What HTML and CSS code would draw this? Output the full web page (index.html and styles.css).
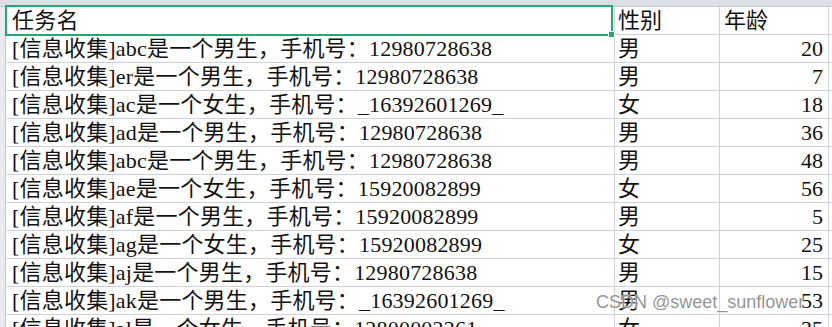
FILE: index.html
```html
<!DOCTYPE html>
<html lang="zh-CN">
<head>
<meta charset="utf-8">
<title>Sheet</title>
<link rel="stylesheet" href="styles.css">
</head>
<body>
<div class="app">
  <div class="col-head-strip"></div>
  <div class="body-wrap">
    <div class="row-head-strip"></div>
    <div class="grid">
      <div class="cell a selected">任务名</div><div class="cell b">性别</div><div class="cell c">年龄</div><div class="cell d"></div>
      <div class="cell a">[信息收集]abc是一个男生，手机号：12980728638</div><div class="cell b">男</div><div class="cell c num">20</div><div class="cell d"></div>
      <div class="cell a">[信息收集]er是一个男生，手机号：12980728638</div><div class="cell b">男</div><div class="cell c num">7</div><div class="cell d"></div>
      <div class="cell a">[信息收集]ac是一个女生，手机号：_16392601269_</div><div class="cell b">女</div><div class="cell c num">18</div><div class="cell d"></div>
      <div class="cell a">[信息收集]ad是一个男生，手机号：12980728638</div><div class="cell b">男</div><div class="cell c num">36</div><div class="cell d"></div>
      <div class="cell a">[信息收集]abc是一个男生，手机号：12980728638</div><div class="cell b">男</div><div class="cell c num">48</div><div class="cell d"></div>
      <div class="cell a">[信息收集]ae是一个女生，手机号：15920082899</div><div class="cell b">女</div><div class="cell c num">56</div><div class="cell d"></div>
      <div class="cell a">[信息收集]af是一个男生，手机号：15920082899</div><div class="cell b">男</div><div class="cell c num">5</div><div class="cell d"></div>
      <div class="cell a">[信息收集]ag是一个女生，手机号：15920082899</div><div class="cell b">女</div><div class="cell c num">25</div><div class="cell d"></div>
      <div class="cell a">[信息收集]aj是一个男生，手机号：12980728638</div><div class="cell b">男</div><div class="cell c num">15</div><div class="cell d"></div>
      <div class="cell a">[信息收集]ak是一个男生，手机号：_16392601269_</div><div class="cell b">男</div><div class="cell c num">53</div><div class="cell d"></div>
      <div class="cell a">[信息收集]al是一个女生，手机号：12800002261</div><div class="cell b">女</div><div class="cell c num">35</div><div class="cell d"></div>
    </div>
  </div>
  <div class="watermark">CSDN @sweet_sunflower</div>
</div>
</body>
</html>
```
FILE: styles.css
```css
html, body {
  margin: 0;
  padding: 0;
  background: #ffffff;
}
.app {
  position: relative;
  width: 832px;
  height: 327px;
  overflow: hidden;
  background: #ffffff;
}
.col-head-strip {
  height: 6px;
  background: #dcdfe5;
  border-bottom: 1px solid #c3c8d3;
}
.body-wrap {
  display: flex;
}
.row-head-strip {
  width: 5px;
  flex: none;
  background: #e8eaee;
  border-right: 1px solid #c3c8d3;
}
.grid {
  display: grid;
  grid-template-columns: 609px 105px 109px 1fr;
  grid-auto-rows: 28px;
  flex: 1;
}
.cell {
  box-sizing: border-box;
  border-right: 1px solid #cdd1dc;
  border-bottom: 1px solid #cdd1dc;
  font-family: "Liberation Serif", "Noto Sans CJK SC", serif;
  font-size: 22px;
  line-height: 27px;
  color: #111111;
  white-space: nowrap;
  overflow: hidden;
  padding: 0 4px 0 6px;
}
.cell.a {
  letter-spacing: 0.2px;
}
.cell.b {
  padding-left: 3px;
}
.cell.c {
  padding-left: 4px;
}
.cell.num {
  text-align: right;
  padding-right: 5px;
}
.cell.d {
  border-right: none;
}
.cell.selected {
  position: relative;
  overflow: visible;
}
.cell.selected::after {
  content: "";
  position: absolute;
  left: -1px;
  top: -2px;
  width: 608px;
  height: 31px;
  box-sizing: border-box;
  border: 2px solid #22a870;
  z-index: 2;
}
.cell.selected::before {
  content: "";
  position: absolute;
  left: 602px;
  top: 24px;
  width: 5px;
  height: 5px;
  background: #22a870;
  border: 1px solid #ffffff;
  z-index: 3;
}
.watermark {
  position: absolute;
  left: 596px;
  top: 291px;
  font-family: "Liberation Sans", Arial, sans-serif;
  font-size: 18px;
  line-height: 22px;
  color: rgba(110, 110, 110, 0.75);
  text-shadow: 0 0 1px #ffffff, 0 0 2px #ffffff;
  white-space: nowrap;
}
```
